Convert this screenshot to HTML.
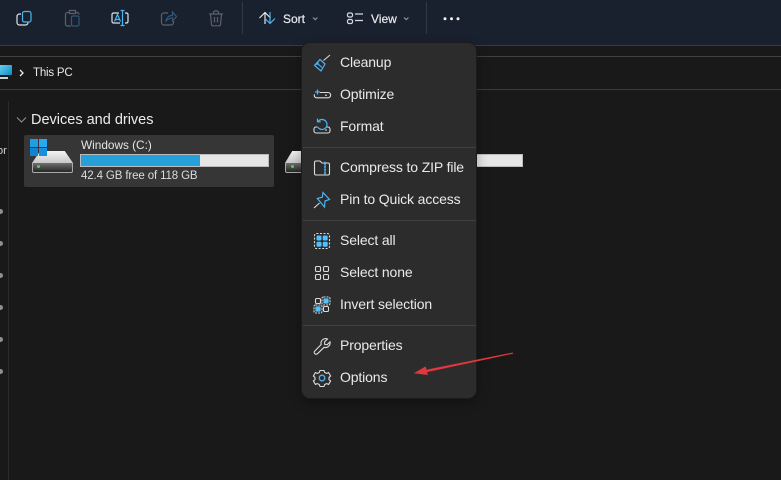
<!DOCTYPE html>
<html><head><meta charset="utf-8">
<style>
html,body{margin:0;padding:0;background:#191919;}
body{width:781px;height:480px;position:relative;overflow:hidden;font-family:"Liberation Sans",sans-serif;color:#f0f0f0;}
.a{position:absolute;}
.t{position:absolute;white-space:nowrap;line-height:16px;}
.m{font-size:14px;left:340px;color:#e9e9e9;letter-spacing:-.13px;}
.sep{position:absolute;left:303px;width:173px;height:1px;background:#404040;}
svg{position:absolute;overflow:visible;fill:none;}
</style></head><body>
<!-- toolbar -->
<div class="a" style="left:0;top:0;width:781px;height:45px;background:#1a212e"></div>
<div class="a" style="left:0;top:45px;width:781px;height:1px;background:#3b3b3b"></div>
<div class="a" style="left:0;top:56px;width:781px;height:1px;background:#404040"></div>
<div class="a" style="left:0;top:89px;width:781px;height:1px;background:#3c3c3c"></div>
<div class="a" style="left:242px;top:2px;width:1px;height:32px;background:#323845"></div>
<div class="a" style="left:426px;top:2px;width:1px;height:32px;background:#323845"></div>
<div class="a" style="left:8px;top:101px;width:1px;height:379px;background:#2a2a2a"></div>

<!-- toolbar icons -->
<svg style="left:0;top:0" width="300" height="40" stroke-width="1.200">
<path d="M21 14h-1.500a2.500 2.500 0 0 0-2.500 2.500v6a2.500 2.500 0 0 0 2.500 2.500h6a2.500 2.500 0 0 0 2.500-2.500" stroke="#dfe3e8"/>
<rect x="22.500" y="11.500" width="8.500" height="10.500" rx="2" stroke="#4cb4f0"/>
<path d="M70 12.500h-2.500a2 2 0 0 0-2 2v9.500a2 2 0 0 0 2 2H71M69.500 10.500h6v3h-6zM75.500 12.500h1.500a2 2 0 0 1 2 2" stroke="#5b616b"/>
<rect x="71.500" y="16" width="7.500" height="10" rx="1.500" stroke="#2f587a"/>
<path d="M119 13h-5.500a1.500 1.500 0 0 0-1.500 1.500v7a1.500 1.500 0 0 0 1.500 1.500H120M125 13h1.500a1.500 1.500 0 0 1 1.500 1.500v7a1.500 1.500 0 0 1-1.500 1.500H125" stroke="#dfe3e8"/>
<path d="M114.500 21.500L117.500 14.500l3 7M115.500 19.500h4M122.500 10.500v15M120.500 10.500h4M120.500 25.500h4" stroke="#4cb4f0"/>
<path d="M168 13h-4a2.500 2.500 0 0 0-2.500 2.500v7a2.500 2.500 0 0 0 2.500 2.500h7a2.500 2.500 0 0 0 2.500-2.500V21" stroke="#5b616b"/>
<path d="M166 21c.5-3.500 3-5.500 6.500-5.500V12l4 4.500-4 4.500v-3c-2.500 0-4.500 1-6.500 3z" stroke="#2f587a"/>
<path d="M209 14h14M213.500 14v-1.500a1.500 1.500 0 0 1 1.500-1.500h2a1.500 1.500 0 0 1 1.500 1.500V14M210.500 14l1 10.500a1.500 1.500 0 0 0 1.500 1.300h6a1.500 1.500 0 0 0 1.500-1.300l1-10.500M214.500 17v5.500M217.500 17v5.500" stroke="#5b616b"/>
<path d="M265 24V12.500M259.500 18l5.500-5.500 5.500 5.500" stroke="#e6e6e6"/>
<path d="M269.500 12v11.500M264.500 18.500l5 5 5-5" stroke="#4cb4f0" transform="translate(.5 0)"/>
<path d="M313 17.500l2.200 2.200 2.200-2.200" stroke="#8d9299"/>
<rect x="347.500" y="13" width="5" height="4" rx="1.500" stroke="#d5d8dc"/>
<rect x="347.500" y="19.500" width="5" height="4" rx="1.500" stroke="#d5d8dc"/>
<path d="M355 14h8M355 20.500h8" stroke="#d5d8dc"/>
<path d="M404 17.500l2.200 2.200 2.200-2.200" stroke="#8d9299"/>
<circle cx="445" cy="18.800" r="1.500" fill="#f0f0f0"/><circle cx="451.500" cy="18.800" r="1.500" fill="#f0f0f0"/><circle cx="458" cy="18.800" r="1.500" fill="#f0f0f0"/>
</svg>
<div class="t" style="left:283px;top:11px;font-size:12px;color:#e8eaed;-webkit-text-stroke:.2px #e8eaed">Sort</div>
<div class="t" style="left:371px;top:11px;font-size:12px;color:#e8eaed;-webkit-text-stroke:.2px #e8eaed">View</div>

<!-- address -->
<div class="a" style="left:0;top:65px;width:12px;height:10px;background:linear-gradient(135deg,#5fd0ee,#1488c8);border-radius:0 1px 1px 0"></div>
<div class="a" style="left:0;top:77px;width:8px;height:2px;background:#c9d3d8"></div>
<svg style="left:0;top:0" width="40" height="90" stroke-width="1.300"><path d="M20 70l3 3-3 3" stroke="#eeeeee"/></svg>
<div class="t" style="left:33px;top:65px;font-size:11.500px;color:#e8e8e8;letter-spacing:-.2px">This PC</div>

<!-- group -->
<svg style="left:0;top:0" width="40" height="130" stroke-width="1.100"><path d="M17 117.500l4.500 4.500 4.500-4.500" stroke="#8f8f8f"/></svg>
<div class="t" style="left:31px;top:112px;font-size:14.500px;color:#ececec">Devices and drives</div>
<div class="t" style="left:-3px;top:143px;font-size:11px;color:#d5d5d5">or</div>

<!-- drive card -->
<div class="a" style="left:24px;top:135px;width:250px;height:52px;background:#363636;border-radius:2px"></div>
<div class="a" style="left:32px;top:151px;width:41px;height:12px;background:linear-gradient(#f4f4f4,#c8c8c8);clip-path:polygon(20% 0,80% 0,100% 100%,0 100%)"></div>
<div class="a" style="left:32px;top:163px;width:41px;height:10px;background:linear-gradient(#6f6f6f,#262626);border:1px solid #aaa;border-top:0;box-sizing:border-box;border-radius:0 0 2px 2px"></div>
<div class="a" style="left:36.500px;top:164.500px;width:3px;height:3px;background:#3fe03f;border-radius:2px"></div>
<div class="a" style="left:30px;top:139px;width:8px;height:8px;background:#1f9ee6"></div>
<div class="a" style="left:39px;top:139px;width:8px;height:8px;background:#2aa7ee"></div>
<div class="a" style="left:30px;top:148px;width:8px;height:8px;background:#0f83d4"></div>
<div class="a" style="left:39px;top:148px;width:8px;height:8px;background:#1690de"></div>
<div class="t" style="left:81px;top:137px;font-size:11.800px;color:#e6e6e6">Windows (C:)</div>
<div class="a" style="left:80px;top:154px;width:189px;height:13px;background:#e6e6e6;box-sizing:border-box;border:1px solid #bcbcbc"></div>
<div class="a" style="left:81px;top:155px;width:119px;height:11px;background:#26a0da"></div>
<div class="t" style="left:81px;top:168px;font-size:11.500px;color:#dcdcdc;letter-spacing:-.13px">42.4 GB free of 118 GB</div>

<!-- second drive -->
<div class="a" style="left:285px;top:151px;width:30px;height:12px;background:linear-gradient(#f4f4f4,#c8c8c8);clip-path:polygon(24% 0,100% 0,100% 100%,0 100%)"></div>
<div class="a" style="left:285px;top:163px;width:30px;height:10px;background:linear-gradient(#6f6f6f,#262626);border:1px solid #aaa;border-top:0;box-sizing:border-box;border-radius:0 0 0 2px"></div>
<div class="a" style="left:290.500px;top:164.500px;width:3px;height:3px;background:#3fe03f;border-radius:2px"></div>
<div class="a" style="left:470px;top:154px;width:53px;height:13px;background:#e6e6e6;box-sizing:border-box;border:1px solid #bcbcbc"></div>

<!-- left arrows -->
<div class="a" style="left:0;top:209px;width:3px;height:5px;background:#8a8f95;border-radius:0 3px 3px 0"></div>
<div class="a" style="left:0;top:241px;width:3px;height:5px;background:#8a8f95;border-radius:0 3px 3px 0"></div>
<div class="a" style="left:0;top:273px;width:3px;height:5px;background:#8a8f95;border-radius:0 3px 3px 0"></div>
<div class="a" style="left:0;top:305px;width:3px;height:5px;background:#8a8f95;border-radius:0 3px 3px 0"></div>
<div class="a" style="left:0;top:337px;width:3px;height:5px;background:#8a8f95;border-radius:0 3px 3px 0"></div>
<div class="a" style="left:0;top:369px;width:3px;height:5px;background:#8a8f95;border-radius:0 3px 3px 0"></div>

<!-- menu -->
<div class="a" style="left:302px;top:43px;width:174px;height:355px;background:#2c2c2c;border-radius:8px;box-shadow:0 0 0 1px #1c1c1c,0 4px 12px rgba(0,0,0,.35)"></div>
<div class="sep" style="top:147px"></div>
<div class="sep" style="top:220px"></div>
<div class="sep" style="top:325px"></div>
<div class="t m" style="top:54px">Cleanup</div>
<div class="t m" style="top:86px">Optimize</div>
<div class="t m" style="top:118px">Format</div>
<div class="t m" style="top:159px">Compress to ZIP file</div>
<div class="t m" style="top:191px">Pin to Quick access</div>
<div class="t m" style="top:232px">Select all</div>
<div class="t m" style="top:264px">Select none</div>
<div class="t m" style="top:296px">Invert selection</div>
<div class="t m" style="top:337px">Properties</div>
<div class="t m" style="top:369px">Options</div>

<svg style="left:0;top:0" width="781" height="480" stroke-width="1.100">
<!-- cleanup -->
<path d="M323.500 60.500L330 55" stroke="#d8d8d8"/>
<path d="M320 59.500l5 4.500-4 7-6.500-5.500z" stroke="#4cb4f0" stroke-width="1.200"/>
<path d="M317 63l5 4.500M316.500 65l2-2.500" stroke="#4cb4f0"/>
<!-- optimize -->
<path d="M320 92.500h8a2.400 2.400 0 0 1 0 5.300h-11.500a2.400 2.400 0 0 1-2-3.500" stroke="#dcdcdc"/>
<path d="M317.500 89.500v5M315 92h5" stroke="#4cb4f0" stroke-width="1.300"/>
<path d="M325 95.200h2" stroke="#dcdcdc"/>
<!-- format -->
<path d="M317.500 127h-1.500a2 2 0 0 0-2 2v2a2 2 0 0 0 2 2h12a2 2 0 0 0 2-2v-2a2 2 0 0 0-2-2h-1.500M325 130h2" stroke="#dcdcdc"/>
<path d="M318 121.500a5 5 0 1 1 -.3 5.500M317.500 118.500v3.300h3.300" stroke="#4cb4f0" stroke-width="1.200"/>
<!-- zip -->
<path d="M314.500 162.500a1.500 1.500 0 0 1 1.500-1.500h4l2 2h6a1.500 1.500 0 0 1 1.500 1.500v9a1.500 1.500 0 0 1-1.500 1.500h-12a1.500 1.500 0 0 1-1.500-1.500z" stroke="#dcdcdc"/>
<path d="M325 161.500v13M324 164h2M324 167h2M324 170h2M324 173h2" stroke="#4cb4f0"/>
<!-- pin -->
<path d="M323 192.500l6.500 7-4.500 1.500-.5 6-7.200-8.500 5-1.300z" stroke="#4cb4f0" stroke-width="1.200"/>
<path d="M319.500 203L314 208" stroke="#dcdcdc"/>
<!-- select all -->
<rect x="314.500" y="233.500" width="15" height="15" rx="2" stroke="#d8d8d8" stroke-dasharray="2 1.500"/>
<rect x="316.500" y="235.500" width="5" height="5" rx="1.200" fill="#4fc1ff"/><rect x="322.700" y="235.500" width="5" height="5" rx="1.200" fill="#4fc1ff"/>
<rect x="316.500" y="241.700" width="5" height="5" rx="1.200" fill="#4fc1ff"/><rect x="322.700" y="241.700" width="5" height="5" rx="1.200" fill="#4fc1ff"/>
<!-- select none -->
<rect x="315.500" y="266.500" width="5" height="5" rx="1.200" stroke="#dcdcdc"/><rect x="323.500" y="266.500" width="5" height="5" rx="1.200" stroke="#dcdcdc"/>
<rect x="315.500" y="274.500" width="5" height="5" rx="1.200" stroke="#dcdcdc"/><rect x="323.500" y="274.500" width="5" height="5" rx="1.200" stroke="#dcdcdc"/>
<!-- invert -->
<rect x="315.500" y="298.500" width="5" height="5" rx="1.200" stroke="#dcdcdc"/><rect x="323.500" y="306.500" width="5" height="5" rx="1.200" stroke="#dcdcdc"/>
<rect x="322" y="297" width="8" height="8" rx="1.500" stroke="#d8d8d8" stroke-dasharray="2 1"/><rect x="314" y="305" width="8" height="8" rx="1.500" stroke="#d8d8d8" stroke-dasharray="2 1"/>
<rect x="323.400" y="298.400" width="5.200" height="5.200" rx="1" fill="#4fc1ff"/><rect x="315.400" y="306.400" width="5.200" height="5.200" rx="1" fill="#4fc1ff"/>
<!-- wrench -->
<path d="M328 339.200l-3 3 .2 2.500 2.500.2 2.800-2.800a4.600 4.600 0 0 1-5.900 5.400l-6.600 6.400a1.900 1.900 0 0 1-2.700-2.700l6.400-6.500a4.600 4.600 0 0 1 6.300-5.500z" stroke="#dcdcdc" transform="translate(-.5 -.2)"/>
<!-- gear -->
<path d="M320 370.500h4l.7 2 1.900.9 2-.8 2 3.400-1.600 1.400v2.200l1.600 1.400-2 3.400-2-.8-1.900.9-.7 2h-4l-.7-2-1.900-.9-2 .8-2-3.400 1.600-1.400v-2.200l-1.600-1.400 2-3.400 2 .8 1.900-.9z" stroke="#dcdcdc"/>
<circle cx="322" cy="378" r="2.800" stroke="#4cb4f0" stroke-width="1.300"/>
<!-- red arrow -->
<path d="M513 352.500L426 369.800l.4 2.400L513 353.700z" fill="#e0383c"/>
<path d="M415 373L425.500 367l.8 3.500 1 4z" fill="#e0383c" stroke="#e0383c" stroke-width=".8"/>
</svg>
</body></html>
